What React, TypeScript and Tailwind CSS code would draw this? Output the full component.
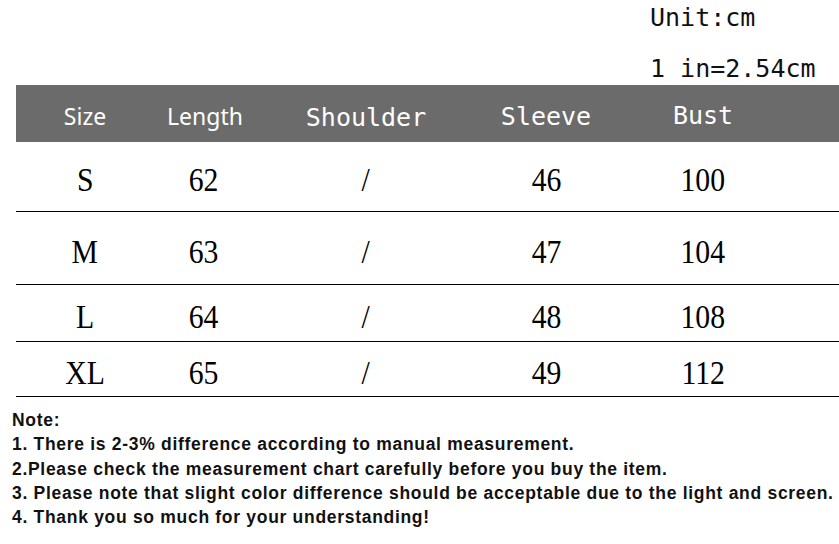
import React from 'react'

type Row = {
  size: string
  length: string
  shoulder: string
  sleeve: string
  bust: string
  height: string
}

const rows: Row[] = [
  { size: 'S', length: '62', shoulder: '/', sleeve: '46', bust: '100', height: 'h-[70px]' },
  { size: 'M', length: '63', shoulder: '/', sleeve: '47', bust: '104', height: 'h-[73px]' },
  { size: 'L', length: '64', shoulder: '/', sleeve: '48', bust: '108', height: 'h-[57px]' },
  { size: 'XL', length: '65', shoulder: '/', sleeve: '49', bust: '112', height: 'h-[55px]' },
]

const cols = 'grid grid-cols-[138px_98px_228px_132px_182px_1fr]'
const mono = "font-['DejaVu_Sans_Mono',monospace] text-[25px]"
const sans = "font-['Noto_Sans',sans-serif] text-[23px]"

const notes = [
  'Note:',
  '1. There is 2-3% difference according to manual measurement.',
  '2.Please check the measurement chart carefully before you buy the item.',
  '3. Please note that slight color difference should be acceptable due to the light and screen.',
  '4. Thank you so much for your understanding!',
]

function Cell({ children }: { children: React.ReactNode }) {
  return (
    <div className="flex items-center justify-center pt-[8px]">
      <span className="inline-block scale-x-90 leading-none">{children}</span>
    </div>
  )
}

export default function App() {
  return (
    <div className="h-[544px] w-[839px] overflow-hidden bg-white text-black">
      <div className="flex justify-end pt-[2px]">
        <div className={`w-[189px] ${mono} text-[#111]`}>
          <div className="h-[32px] leading-[32px]">Unit:cm</div>
          <div className="mt-[19px] h-[32px] leading-[32px]">1 in=2.54cm</div>
        </div>
      </div>

      <div className="ml-[16px]">
        <div className={`${cols} h-[57px] bg-[#6b6b6b] text-white`}>
          <div className={`flex items-center justify-center pt-[6px] ${sans}`}>Size</div>
          <div className={`flex items-center justify-center pt-[6px] pl-[4px] ${sans}`}>Length</div>
          <div className={`flex items-center justify-center pt-[9px] ${mono}`}>Shoulder</div>
          <div className={`flex items-center justify-center pt-[7px] ${mono}`}>Sleeve</div>
          <div className={`flex items-center justify-center pt-[4px] ${mono}`}>Bust</div>
          <div />
        </div>

        {rows.map((r) => (
          <div
            key={r.size}
            className={`${cols} ${r.height} border-b border-black font-['Liberation_Serif',serif] text-[33px]`}
          >
            <Cell>{r.size}</Cell>
            <Cell>{r.length}</Cell>
            <Cell>{r.shoulder}</Cell>
            <Cell>{r.sleeve}</Cell>
            <Cell>{r.bust}</Cell>
            <div />
          </div>
        ))}
      </div>

      <div className="mt-[11px] pl-[12px] font-['Liberation_Sans',Arial,sans-serif] text-[17.5px] font-bold leading-[24.3px] tracking-[0.7px] text-[#111]">
        {notes.map((n) => (
          <div key={n} className="whitespace-nowrap">
            {n}
          </div>
        ))}
      </div>
    </div>
  )
}
